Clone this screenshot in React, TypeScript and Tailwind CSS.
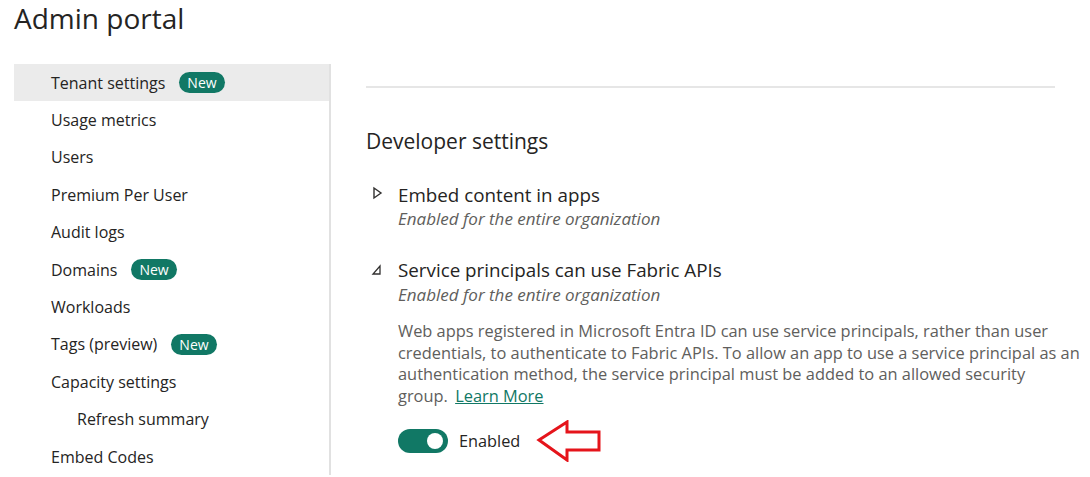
import React from "react";

const navItems = [
  { label: "Tenant settings", badge: true, active: true },
  { label: "Usage metrics" },
  { label: "Users" },
  { label: "Premium Per User" },
  { label: "Audit logs" },
  { label: "Domains", badge: true },
  { label: "Workloads" },
  { label: "Tags (preview)", badge: true },
  { label: "Capacity settings" },
  { label: "Refresh summary", indent: true },
  { label: "Embed Codes" },
];

const NewBadge = () => (
  <span className="ml-[14px] inline-flex h-[21px] items-center rounded-full bg-[#117865] px-[8px] text-[14px] text-white">
    New
  </span>
);

const ArrowAnnotation = () => (
  <svg width="66" height="42" viewBox="0 0 66 42" className="ml-[16px]">
    <path
      d="M3 20 L31 2 L31 12 L63 12 L63 30 L31 30 L31 40 Z"
      fill="none"
      stroke="#e5141b"
      strokeWidth="3"
      strokeLinejoin="miter"
    />
  </svg>
);

const App = () => {
  return (
    <div className="h-[477px] w-[1090px] overflow-hidden bg-white font-['Open_Sans',sans-serif] text-[#252423]">
      <h1 className="pl-[14px] pt-[2px] text-[28px] leading-[32px]">Admin portal</h1>

      <div className="mt-[30px] flex">
        {/* Left nav */}
        <nav className="ml-[14px] w-[317px] border-r-2 border-[#e1e1e1]">
          {navItems.map((item) => (
            <div
              key={item.label}
              className={`flex h-[37.4px] items-center text-[16px] ${
                item.indent ? "pl-[63px]" : "pl-[37px]"
              } ${item.active ? "bg-[#ebebeb]" : ""}`}
            >
              {item.label}
              {item.badge && <NewBadge />}
            </div>
          ))}
        </nav>

        {/* Main content */}
        <main className="flex-1 pl-[35px]">
          <div className="mt-[22px] mr-[35px] h-[2px] bg-[#e6e6e6]" />

          <h2 className="mt-[40px] text-[21px] leading-[26px]">Developer settings</h2>

          <div className="mt-[29px] flex">
            <span className="w-[32px] pt-[3px]">
              <svg width="12" height="14" viewBox="0 0 12 14" className="ml-[6px]">
                <path d="M2 2 L9 7 L2 12 Z" fill="none" stroke="#323130" strokeWidth="1.4" />
              </svg>
            </span>
            <div>
              <div className="text-[18.8px] leading-[24px]">Embed content in apps</div>
              <div className="text-[17px] italic leading-[24px] text-[#605e5c]">
                Enabled for the entire organization
              </div>
            </div>
          </div>

          <div className="mt-[27px] flex">
            <span className="w-[32px] pt-[5px]">
              <svg width="12" height="14" viewBox="0 0 12 14" className="ml-[5px]">
                <path d="M9 3 L9 11 L2 11 Z" fill="none" stroke="#323130" strokeWidth="1.3" />
              </svg>
            </span>
            <div>
              <div className="text-[18.8px] leading-[24px]">Service principals can use Fabric APIs</div>
              <div className="text-[17px] italic leading-[26px] text-[#605e5c]">
                Enabled for the entire organization
              </div>
              <p className="mt-[12px] w-[690px] text-[16.4px] leading-[21.5px] text-[#605e5c]">
                Web apps registered in Microsoft Entra ID can use service principals, rather than user
                credentials, to authenticate to Fabric APIs. To allow an app to use a service principal as an
                authentication method, the service principal must be added to an allowed security{" "}
                <span className="whitespace-nowrap">
                  group.{" "}
                  <a href="#" className="ml-[3px] text-[#117865] underline">
                    Learn More
                  </a>
                </span>
              </p>

              <div className="mt-[14px] flex items-center">
                <span className="relative h-[24px] w-[50px] rounded-full bg-[#117865]">
                  <span className="absolute right-[5px] top-[4px] h-[16px] w-[16px] rounded-full bg-white" />
                </span>
                <span className="ml-[11px] text-[16.3px]">Enabled</span>
                <ArrowAnnotation />
              </div>
            </div>
          </div>
        </main>
      </div>
    </div>
  );
};

export default App;
